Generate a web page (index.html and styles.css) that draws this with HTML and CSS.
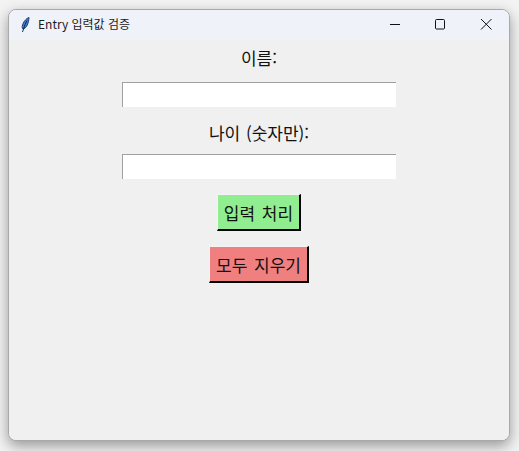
FILE: index.html
```html
<!DOCTYPE html>
<html lang="ko">
<head>
    <meta charset="UTF-8">
    <meta name="viewport" content="width=device-width, initial-scale=1.0">
    <title>Entry 입력값 검증</title>
    <link rel="stylesheet" href="styles.css">
</head>
<body>
    <div class="window">
        <div class="title-bar">
            <svg class="feather" width="16" height="18" viewBox="0 0 16 18">
                <path d="M12 1.5C9 2.5 6 6 5.2 10.5C5 12 5.5 13 6.5 13C9.5 12 11.8 7 12 1.5Z" fill="#3f80dc" stroke="#12305e" stroke-width="0.9"/>
                <path d="M10 4.5C8.5 7 7.5 10 6.5 13L5.5 16" fill="none" stroke="#0c1a30" stroke-width="0.9"/>
            </svg>
            <span class="title">Entry 입력값 검증</span>
            <div class="controls">
                <svg class="control" width="46" height="30" viewBox="0 0 46 30">
                    <path d="M19 14.5H29" stroke="#111" stroke-width="1" fill="none"/>
                </svg>
                <svg class="control" width="46" height="30" viewBox="0 0 46 30">
                    <rect x="18.5" y="9.5" width="9" height="9.5" rx="1" stroke="#111" stroke-width="1" fill="none"/>
                </svg>
                <svg class="control" width="46" height="30" viewBox="0 0 46 30">
                    <path d="M18 9L28.5 19.5M28.5 9L18 19.5" stroke="#111" stroke-width="1" fill="none"/>
                </svg>
            </div>
        </div>
        <div class="content">
            <label class="field-label">이름:</label>
            <input class="entry" type="text">
            <label class="field-label age-label">나이 (숫자만):</label>
            <input class="entry" type="text">
            <button class="btn submit">입력 처리</button>
            <button class="btn clear">모두 지우기</button>
        </div>
    </div>
</body>
</html>
```

FILE: styles.css
```css
* {
    margin: 0;
    padding: 0;
    box-sizing: border-box;
}

html, body {
    height: 100%;
}

body {
    background: #f3f3f3;
    font-family: "Noto Sans CJK KR", "Noto Sans", sans-serif;
    overflow: hidden;
    padding: 9px 9px 10px 8px;
    color: #111;
}

.window {
    height: 432px;
    background: #f0f0f0;
    border: 1px solid #a9a9a9;
    border-radius: 8px;
    box-shadow: 0 5px 14px rgba(0, 0, 0, 0.38);
    overflow: hidden;
    display: flex;
    flex-direction: column;
}

.title-bar {
    height: 30px;
    background: #eff3f9;
    display: flex;
    align-items: center;
    padding-left: 8px;
    flex-shrink: 0;
}

.feather {
    flex-shrink: 0;
    margin-top: -1px;
}

.title {
    margin-left: 5px;
    margin-top: -3px;
    font-size: 12px;
    color: #1a1a1a;
}

.controls {
    margin-left: auto;
    display: flex;
}

.control {
    display: block;
}

.content {
    flex: 1;
    display: flex;
    flex-direction: column;
    align-items: center;
    background: #f0f0f0;
}

.field-label {
    font-size: 17px;
    line-height: 24px;
    margin-top: 6px;
    color: #111;
    word-spacing: 1px;
}

.age-label {
    margin-top: 14px;
}

.entry {
    display: block;
    width: 274px;
    height: 25px;
    margin-top: 12px;
    background: #fff;
    border: none;
    border-top: 1px solid #a0a0a0;
    border-left: 1px solid #a0a0a0;
    outline: none;
}

.age-label + .entry {
    margin-top: 9px;
}

.btn {
    font-family: inherit;
    font-size: 17px;
    word-spacing: 2px;
    color: #111;
    height: 37px;
    padding: 0;
    border: 1px solid;
    border-color: #f4f4f4 #000 #000 #f4f4f4;
    border-width: 1px 2px 2px 1px;
}

.submit {
    margin-top: 15px;
    width: 84px;
    background: #90ee90;
}

.clear {
    margin-top: 15px;
    width: 100px;
    background: #f08080;
}
```
